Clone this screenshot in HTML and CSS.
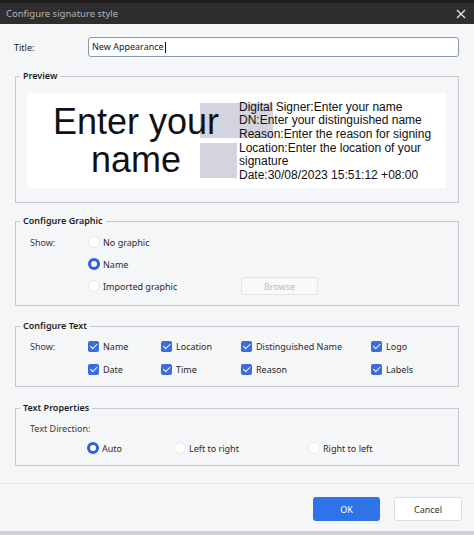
FILE: index.html
```html
<!DOCTYPE html>
<html lang="en">
<head>
<meta charset="utf-8">
<title>Configure signature style</title>
<link rel="stylesheet" href="styles.css">
</head>
<body>
<div class="dialog">
  <header class="titlebar">
    <span class="titlebar-text">Configure signature style</span>
    <svg class="close-icon" width="10" height="10" viewBox="0 0 10 10" aria-label="Close">
      <path d="M1 1 L9 9 M9 1 L1 9" stroke="#e6e6e6" stroke-width="1.3" fill="none"/>
    </svg>
  </header>

  <main class="content">
    <div class="title-row">
      <span class="field-label">Title:</span>
      <div class="textbox">New Appearance<span class="caret"></span></div>
    </div>

    <fieldset class="group group-preview">
      <legend>Preview</legend>
      <div class="preview">
        <div class="logo"><span class="logo-a"></span><span class="logo-b"></span></div>
        <div class="sig-name">Enter your<br>name</div>
        <div class="sig-details">Digital Signer:Enter your name<br>DN:Enter your distinguished name<br>Reason:Enter the reason for signing<br>Location:Enter the location of your signature<br>Date:30/08/2023 15:51:12 +08:00</div>
      </div>
    </fieldset>

    <fieldset class="group group-graphic">
      <legend>Configure Graphic</legend>
      <div class="graphic-grid">
        <span class="show-label">Show:</span>
        <span class="option"><span class="radio"></span>No graphic</span>
        <span></span>
        <span></span>
        <span class="option"><span class="radio checked"></span>Name</span>
        <span></span>
        <span></span>
        <span class="option"><span class="radio"></span>Imported graphic</span>
        <span class="browse">Browse</span>
      </div>
    </fieldset>

    <fieldset class="group group-text">
      <legend>Configure Text</legend>
      <div class="text-grid">
        <span class="show-label">Show:</span>
        <span class="option"><span class="check"></span>Name</span>
        <span class="option"><span class="check"></span>Location</span>
        <span class="option"><span class="check"></span>Distinguished Name</span>
        <span class="option"><span class="check"></span>Logo</span>
        <span></span>
        <span class="option"><span class="check"></span>Date</span>
        <span class="option"><span class="check"></span>Time</span>
        <span class="option"><span class="check"></span>Reason</span>
        <span class="option"><span class="check"></span>Labels</span>
      </div>
    </fieldset>

    <fieldset class="group group-props">
      <legend>Text Properties</legend>
      <div class="dir-label">Text Direction:</div>
      <div class="dir-row">
        <span class="option"><span class="radio checked"></span>Auto</span>
        <span class="option"><span class="radio"></span>Left to right</span>
        <span class="option"><span class="radio"></span>Right to left</span>
      </div>
    </fieldset>
  </main>

  <footer class="footer">
    <span class="btn btn-primary">OK</span>
    <span class="btn btn-secondary">Cancel</span>
  </footer>
</div>
</body>
</html>
```

FILE: styles.css
```css
html, body {
  margin: 0;
  padding: 0;
  background: #f5f6f8;
}

body {
  font-family: "Noto Sans", "Open Sans", sans-serif;
  font-size: 9px;
  color: #222;
}

.dialog {
  width: 474px;
  height: 535px;
  display: flex;
  flex-direction: column;
  background: #f5f6f8;
}

/* Title bar */
.titlebar {
  height: 21px;
  border-top: 3px solid #1f1f1f;
  background: #2e2e2e;
  display: flex;
  align-items: center;
  justify-content: space-between;
  padding: 0 8px 0 6px;
}

.titlebar-text {
  color: #b4b4b4;
  font-size: 9.5px;
}

.close-icon {
  display: block;
}

/* Content */
.content {
  padding-top: 13px;
  flex: 1;
}

.title-row {
  display: grid;
  grid-template-columns: 74px 371px;
  align-items: center;
  padding-left: 14px;
  height: 20px;
}

.textbox {
  height: 20px;
  box-sizing: border-box;
  border: 1px solid #8a99ad;
  border-radius: 3px;
  background: #fff;
  padding: 0 3px;
  line-height: 18px;
  color: #1a1a1a;
  display: flex;
  align-items: center;
}

.caret {
  display: inline-block;
  width: 1px;
  height: 11px;
  background: #111;
  margin-left: 1px;
}

/* Group boxes */
.group {
  margin: 0 15px;
  border: 1px solid #c6c9ce;
  min-width: 0;
}

.group legend {
  font-weight: 600;
  font-size: 9px;
  line-height: 14px;
  padding: 0 3px;
  margin-left: -10px;
  color: #1e1e1e;
}

.group-preview {
  margin-top: 12px;
  padding: 10px 12px 14px 11px;
}

.group-preview legend {
  margin-left: -7px;
}

.group-graphic {
  margin-top: 11px;
  padding: 3px 12px 8px 14px;
}

.group-text {
  margin-top: 13px;
  padding: 2px 12px 6px 14px;
}

.group-props {
  margin-top: 14px;
  padding: 7px 12px 7px 14px;
}

/* Preview */
.preview {
  position: relative;
  z-index: 0;
  height: 95px;
  background: #fff;
  display: flex;
  align-items: center;
  font-family: "Liberation Sans", Arial, sans-serif;
  color: #111;
}

.logo {
  position: absolute;
  z-index: -1;
  left: 173px;
  top: 10px;
  display: flex;
  flex-direction: column;
  gap: 5px;
}

.logo-a {
  display: block;
  width: 73px;
  height: 35px;
  background: #d3d4e0;
}

.logo-b {
  display: block;
  width: 37px;
  height: 35px;
  background: #d3d4e0;
}

.sig-name {
  width: 206px;
  padding-left: 6px;
  text-align: center;
  font-size: 36px;
  line-height: 38px;
  margin-top: 1px;
}

.sig-details {
  flex: 1;
  font-size: 12px;
  line-height: 13.6px;
  margin-top: 2px;
}

/* Option rows */
.graphic-grid {
  display: grid;
  grid-template-columns: 58px 153px 77px;
  grid-auto-rows: 22px;
  align-items: center;
}

.text-grid {
  display: grid;
  grid-template-columns: 58px 73px 80px 130px auto;
  grid-auto-rows: 22px;
  row-gap: 1px;
  align-items: center;
}

.show-label {
  color: #3a3a3a;
}

.option {
  display: flex;
  align-items: center;
  color: #2a2a2a;
  white-space: nowrap;
}

.radio {
  width: 12px;
  height: 12px;
  box-sizing: border-box;
  border-radius: 50%;
  background: #fff;
  border: 1px solid #e6e8ec;
  margin-right: 3px;
  flex: none;
}

.radio.checked {
  border: 3px solid #2d62d6;
}

.check {
  width: 11px;
  height: 11px;
  border-radius: 2px;
  background: #3a6ddb;
  margin-right: 4px;
  flex: none;
  position: relative;
}

.check::after {
  content: "";
  position: absolute;
  left: 3.5px;
  top: 1.5px;
  width: 3px;
  height: 5.5px;
  border: solid #fff;
  border-width: 0 1.5px 1.5px 0;
  transform: rotate(45deg);
}

.browse {
  height: 18px;
  box-sizing: border-box;
  border: 1px solid #e1e3e7;
  border-radius: 2px;
  background: #f8f9fa;
  color: #b8bbc0;
  display: flex;
  align-items: center;
  justify-content: center;
}

/* Text properties */
.dir-label {
  line-height: 14px;
  color: #3a3a3a;
}

.dir-row {
  margin-top: 2px;
  height: 20px;
  display: grid;
  grid-template-columns: 87px 134px auto;
  padding-left: 57px;
  align-items: center;
}

/* Footer */
.footer {
  border-top: 1px solid #e4e6e9;
  padding: 13px 12px 10px;
  display: flex;
  justify-content: flex-end;
  gap: 14px;
  border-bottom: 4px solid #cfd0d3;
}

.btn {
  height: 24px;
  box-sizing: border-box;
  border-radius: 3px;
  display: flex;
  align-items: center;
  justify-content: center;
}

.btn-primary {
  width: 67px;
  background: #2f73e8;
  color: #fff;
}

.btn-secondary {
  width: 68px;
  background: #fff;
  border: 1px solid #dadde2;
  color: #333;
}
```
